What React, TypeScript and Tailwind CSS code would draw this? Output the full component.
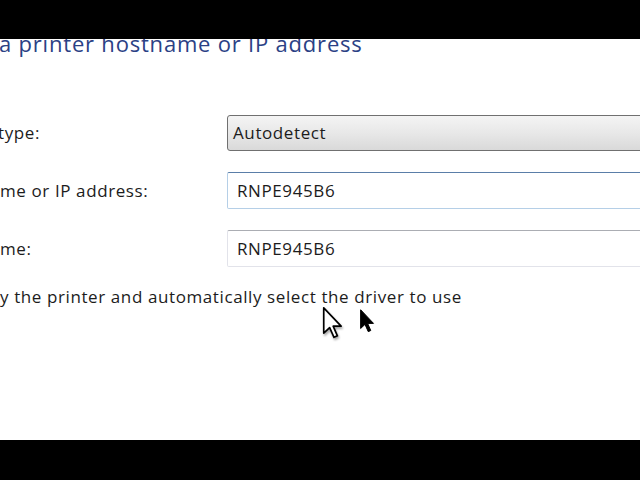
import React from "react";

const font = { fontFamily: '"Open Sans", "Noto Sans", "Liberation Sans", sans-serif' };

function Arrow({ fill, stroke }: { fill: string; stroke: string }) {
  return (
    <svg width="22" height="32" viewBox="0 0 12 19">
      <path
        d="M0.5 0.5 L0.5 15.5 L4 12.2 L6.6 18 L8.6 17.1 L6.1 11.4 L10.8 11.4 Z"
        fill={fill}
        stroke={stroke}
        strokeWidth="1"
        strokeLinejoin="round"
      />
    </svg>
  );
}

export default function App() {
  return (
    <div className="w-[640px] h-[480px] bg-black flex flex-col overflow-hidden" style={font}>
      <div className="h-[39px] bg-black shrink-0" />
      <div className="relative h-[401px] bg-white overflow-hidden flex flex-col">
        <div className="mt-[-7px] text-[22px] leading-none tracking-[0.8px] text-[#2b4185] whitespace-nowrap ml-[-1px]">
          a printer hostname or IP address
        </div>
        <div className="mt-[61px] flex flex-col gap-[21px] text-[17px] tracking-[0.6px] text-[#1c1c1c]">
          <div className="flex items-center">
            <div className="w-[227px] shrink-0 whitespace-nowrap ml-[-2px]">type:</div>
            <div className="w-[430px] h-[36px] shrink-0 rounded-[3px] border border-[#707070] bg-gradient-to-b from-[#f4f4f4] via-[#e8e8e8] to-[#d9d9d9] flex items-center pl-[5px] ml-[2px]">
              Autodetect
            </div>
          </div>
          <div className="flex items-center">
            <div className="w-[227px] shrink-0 whitespace-nowrap">me or IP address:</div>
            <div className="w-[430px] h-[37px] shrink-0 rounded-[2px] border border-[#b5cfe7] border-t-[#5a7ea8] bg-white flex items-center pl-[9px]">
              RNPE945B6
            </div>
          </div>
          <div className="flex items-center">
            <div className="w-[227px] shrink-0 whitespace-nowrap">me:</div>
            <div className="w-[430px] h-[37px] shrink-0 rounded-[2px] border border-[#e2e3ea] border-t-[#abadb3] bg-white flex items-center pl-[9px]">
              RNPE945B6
            </div>
          </div>
        </div>
        <div className="mt-[17px] text-[17px] tracking-[0.6px] text-[#1c1c1c] whitespace-nowrap">
          y the printer and automatically select the driver to use
        </div>
        <div className="absolute left-[322px] top-[268px] drop-shadow-[1px_2px_1px_rgba(0,0,0,0.35)]">
          <Arrow fill="#ffffff" stroke="#000000" />
        </div>
        <div className="absolute left-[360px] top-[270px]">
          <svg width="15" height="24" viewBox="0 0 12 19">
            <path d="M0.5 0.5 L0.5 15.5 L4 12.2 L6.6 18 L8.6 17.1 L6.1 11.4 L10.8 11.4 Z" fill="#000" stroke="#000" strokeWidth="0.8" />
          </svg>
        </div>
      </div>
      <div className="h-[40px] bg-black shrink-0" />
    </div>
  );
}
